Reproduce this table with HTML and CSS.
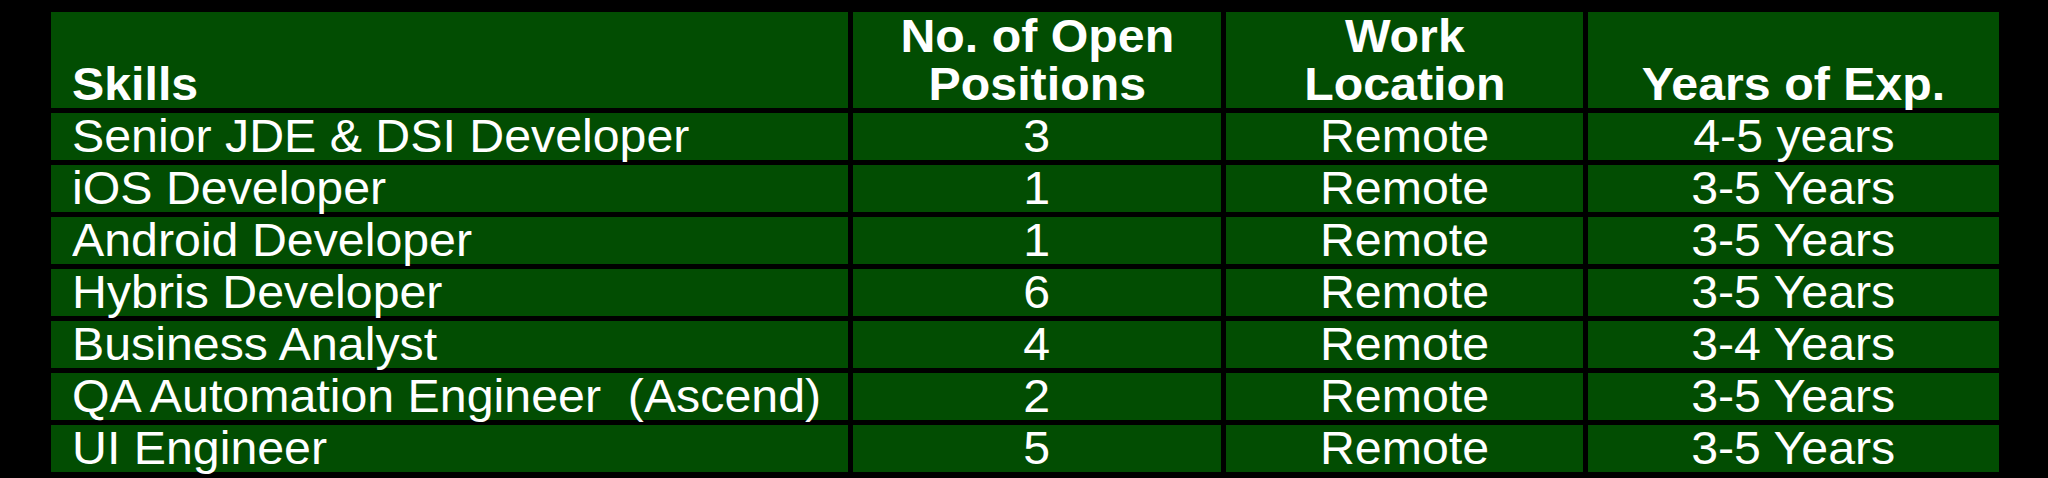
FILE: index.html
```html
<!DOCTYPE html>
<html lang="en">
<head>
<meta charset="utf-8">
<title>Open Positions</title>
<link rel="stylesheet" href="styles.css">
</head>
<body>
<div class="page">
  <table class="jobs">
    <colgroup>
      <col class="c-skill">
      <col class="c-open">
      <col class="c-loc">
      <col class="c-exp">
    </colgroup>
    <thead>
      <tr class="head">
        <th class="left"><span class="t">Skills</span></th>
        <th><span class="t">No. of Open<br>Positions</span></th>
        <th><span class="t">Work<br>Location</span></th>
        <th><span class="t">Years of Exp.</span></th>
      </tr>
    </thead>
    <tbody>
      <tr><td class="left"><span class="t">Senior JDE &amp; DSI Developer</span></td><td><span class="t">3</span></td><td><span class="t">Remote</span></td><td><span class="t">4-5 years</span></td></tr>
      <tr><td class="left"><span class="t">iOS Developer</span></td><td><span class="t">1</span></td><td><span class="t">Remote</span></td><td><span class="t">3-5 Years</span></td></tr>
      <tr><td class="left"><span class="t">Android Developer</span></td><td><span class="t">1</span></td><td><span class="t">Remote</span></td><td><span class="t">3-5 Years</span></td></tr>
      <tr><td class="left"><span class="t">Hybris Developer</span></td><td><span class="t">6</span></td><td><span class="t">Remote</span></td><td><span class="t">3-5 Years</span></td></tr>
      <tr><td class="left"><span class="t">Business Analyst</span></td><td><span class="t">4</span></td><td><span class="t">Remote</span></td><td><span class="t">3-4 Years</span></td></tr>
      <tr><td class="left"><span class="t">QA Automation Engineer&nbsp; (Ascend)</span></td><td><span class="t">2</span></td><td><span class="t">Remote</span></td><td><span class="t">3-5 Years</span></td></tr>
      <tr><td class="left"><span class="t">UI Engineer</span></td><td><span class="t">5</span></td><td><span class="t">Remote</span></td><td><span class="t">3-5 Years</span></td></tr>
    </tbody>
  </table>
</div>
</body>
</html>
```

FILE: styles.css
```css
html, body {
  margin: 0;
  padding: 0;
  background: #000;
}

.page {
  padding: 7px 0 0 46px;
}

.jobs {
  table-layout: fixed;
  border-collapse: separate;
  border-spacing: 5px 5.2px;
  width: 1958px;
  font-family: "Liberation Sans", Arial, Helvetica, sans-serif;
  font-size: 46px;
  color: #fff;
}

.c-skill { width: 797px; }
.c-open  { width: 368px; }
.c-loc   { width: 357px; }
.c-exp   { width: 411px; }

.jobs th,
.jobs td {
  background: #024d02;
  padding: 0;
  text-align: center;
  line-height: 47px;
  height: 47px;
  white-space: nowrap;
}

.jobs th {
  font-weight: bold;
  height: 95px;
  line-height: 48px;
  vertical-align: bottom;
}

.jobs .left {
  text-align: left;
  padding-left: 21px;
}

.t {
  display: inline-block;
  transform: scaleX(1.05);
  transform-origin: center bottom;
}

.left .t {
  transform-origin: left bottom;
}
```
